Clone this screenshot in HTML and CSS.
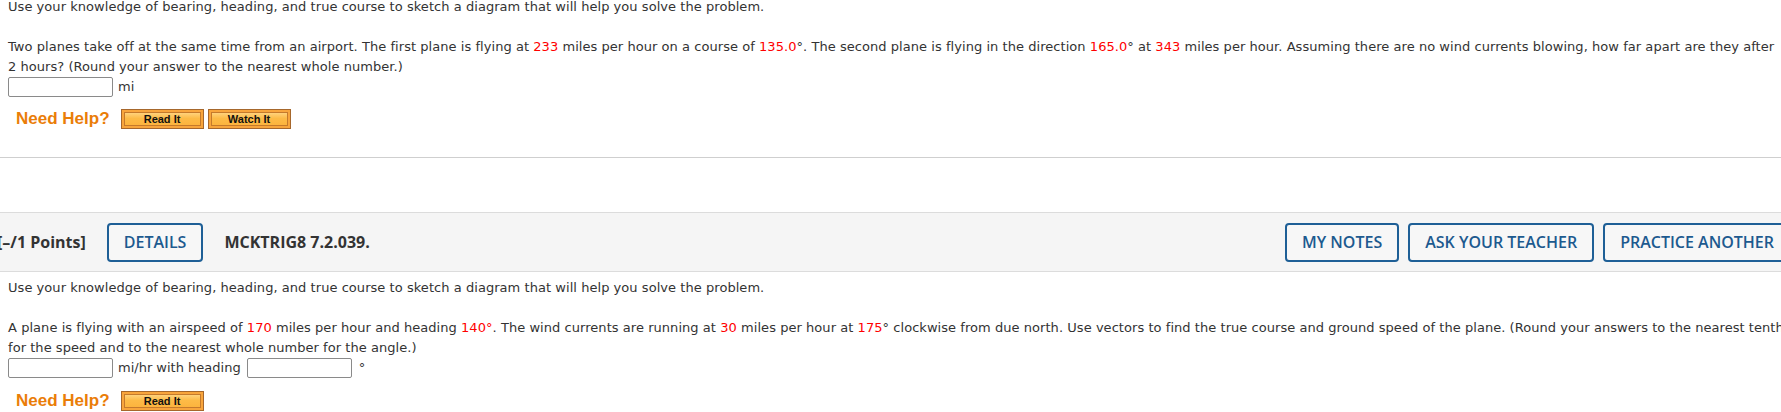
FILE: index.html
```html
<!DOCTYPE html>
<html lang="en">
<head>
<meta charset="utf-8">
<title>Question</title>
<link rel="stylesheet" href="styles.css">
</head>
<body>
<div class="page">
  <section class="question first">
    <p class="intro">Use your knowledge of bearing, heading, and true course to sketch a diagram that will help you solve the problem.</p>
    <p class="stem">Two planes take off at the same time from an airport. The first plane is flying at <span class="num">233</span> miles per hour on a course of <span class="num">135.0</span>&deg;. The second plane is flying in the direction <span class="num">165.0</span>&deg; at <span class="num">343</span> miles per hour. Assuming there are no wind currents blowing, how far apart are they after<br>2 hours? (Round your answer to the nearest whole number.)</p>
    <div class="answer"><input class="ans" type="text"><span class="unit">mi</span></div>
    <div class="help">
      <span class="need">Need Help?</span>
      <button class="hbtn read"><span>Read It</span></button>
      <button class="hbtn watch"><span>Watch It</span></button>
    </div>
  </section>

  <hr class="sep">

  <section class="qbar">
    <span class="points">[&ndash;/1 Points]</span>
    <button class="obtn">DETAILS</button>
    <span class="qid">MCKTRIG8 7.2.039.</span>
    <div class="tools">
      <button class="obtn">MY NOTES</button>
      <button class="obtn">ASK YOUR TEACHER</button>
      <button class="obtn">PRACTICE ANOTHER</button>
    </div>
  </section>

  <section class="question second">
    <p class="intro">Use your knowledge of bearing, heading, and true course to sketch a diagram that will help you solve the problem.</p>
    <p class="stem">A plane is flying with an airspeed of <span class="num">170</span> miles per hour and heading <span class="num">140&deg;</span>. The wind currents are running at <span class="num">30</span> miles per hour at <span class="num">175</span>&deg; clockwise from due north. Use vectors to find the true course and ground speed of the plane. (Round your answers to the nearest tenth<br>for the speed and to the nearest whole number for the angle.)</p>
    <div class="answer"><input class="ans" type="text"><span class="unit">mi/hr with heading</span><input class="ans" type="text"><span class="unit deg">&deg;</span></div>
    <div class="help">
      <span class="need">Need Help?</span>
      <button class="hbtn read"><span>Read It</span></button>
    </div>
  </section>
</div>
</body>
</html>
```

FILE: styles.css
```css
html, body {
  margin: 0;
  padding: 0;
  background: #fff;
  overflow: hidden;
}

.page {
  width: 1800px;
  font-family: "DejaVu Sans", Verdana, sans-serif;
  font-size: 13px;
  color: #333;
}

.question {
  padding: 0 8px;
}

.question.first {
  margin-top: -3px;
}

.question.second {
  padding-top: 6px;
}

.question p {
  margin: 0;
  line-height: 20px;
  white-space: nowrap;
  letter-spacing: 0.05px;
}

.question .intro {
  margin-bottom: 20px;
}

.num {
  color: #ff0000;
}

.answer {
  display: flex;
  align-items: center;
  height: 20px;
}

.ans {
  box-sizing: border-box;
  width: 105px;
  height: 20px;
  margin: 0;
  padding: 0 3px;
  border: 1px solid #8a8a8a;
  border-radius: 2px;
  background: #fff;
  font: inherit;
}

.unit {
  margin: 0 6px 0 5px;
  line-height: 20px;
}

.unit.deg {
  margin-left: 7px;
}

.help {
  display: flex;
  align-items: center;
  margin-top: 12px;
  height: 20px;
}

.second .help {
  margin-top: 13px;
}

.need {
  font-family: "Liberation Sans", Arial, sans-serif;
  font-weight: bold;
  font-size: 17px;
  color: #ea7d08;
  margin-left: 8px;
  margin-right: 11px;
}

.hbtn {
  box-sizing: border-box;
  height: 20px;
  width: 83px;
  margin: 0 4px 0 0;
  padding: 2px;
  border: 1px solid #a6672c;
  background: #f8a53c;
  cursor: pointer;
}

.hbtn span {
  display: block;
  box-sizing: border-box;
  height: 14px;
  border: 1px solid #c57a2c;
  background: linear-gradient(#ffd27c, #fdbb47 45%, #fcb43e);
  font-family: "Liberation Sans", Arial, sans-serif;
  font-weight: bold;
  font-size: 11px;
  line-height: 12px;
  color: #111;
  text-align: center;
}

.sep {
  margin: 28px 0 0 0;
  border: 0;
  border-top: 1px solid #cfcfcf;
  height: 0;
}

.qbar {
  box-sizing: border-box;
  margin-top: 54px;
  height: 60px;
  display: flex;
  align-items: center;
  gap: 21px;
  padding-right: 9px;
  background: #f5f5f5;
  border-top: 1px solid #dcdcdc;
  border-bottom: 1px solid #dcdcdc;
  font-family: "Open Sans", "Noto Sans", sans-serif;
  font-size: 16px;
}

.points {
  margin-left: -3px;
  font-weight: bold;
  color: #333;
}

.qid {
  font-weight: bold;
  color: #333;
}

.tools {
  margin-left: auto;
  display: flex;
  gap: 9px;
}

.obtn {
  box-sizing: border-box;
  height: 39px;
  padding: 0 15px;
  border: 2px solid #1e5f96;
  border-radius: 4px;
  background: #f7f7f7;
  color: #1d5a8f;
  font-family: "Open Sans", "Noto Sans", sans-serif;
  font-size: 16px;
  font-weight: 600;
  cursor: pointer;
}
```
